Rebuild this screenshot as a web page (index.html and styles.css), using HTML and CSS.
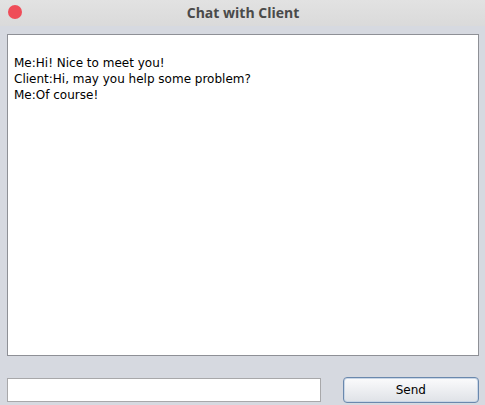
FILE: index.html
```html
<!DOCTYPE html>
<html lang="en">
<head>
    <meta charset="UTF-8">
    <title>Chat with Client</title>
    <link rel="stylesheet" href="styles.css">
</head>
<body>
    <div class="window">
        <div class="titlebar">
            <span class="close-dot"></span>
            <span class="title">Chat with Client</span>
        </div>
        <div class="content">
            <div class="log">
                <div class="line">&nbsp;</div>
                <div class="line">Me:Hi! Nice to meet you!</div>
                <div class="line">Client:Hi, may you help some problem?</div>
                <div class="line">Me:Of course!</div>
            </div>
            <div class="send-row">
                <input class="msg" type="text">
                <button class="send-btn">Send</button>
            </div>
        </div>
    </div>
</body>
</html>
```

FILE: styles.css
```css
* {
    margin: 0;
    padding: 0;
    box-sizing: border-box;
}
body {
    width: 485px;
    height: 405px;
    overflow: hidden;
    background-color: #d6d9e0;
    font-family: "DejaVu Sans", sans-serif;
}
.window {
    display: flex;
    flex-direction: column;
    height: 405px;
}
.titlebar {
    position: relative;
    height: 26px;
    background: linear-gradient(#e2e2e2, #dadada);
    display: flex;
    align-items: center;
    justify-content: center;
}
.close-dot {
    position: absolute;
    left: 8px;
    top: 5px;
    width: 14px;
    height: 14px;
    border-radius: 50%;
    background-color: #ef4c58;
}
.title {
    font-family: "Open Sans", "DejaVu Sans", sans-serif;
    font-weight: bold;
    font-size: 14px;
    color: #4a4a4a;
    margin-top: -1px;
    margin-left: 1px;
}
.content {
    padding: 8px 6px 0 7px;
}
.log {
    width: 472px;
    height: 322px;
    background-color: #fff;
    border: 1px solid #8e9096;
    padding: 4px 6px;
    font-size: 12px;
    line-height: 16px;
    color: #000;
}
.send-row {
    display: flex;
    align-items: center;
    margin-top: 21px;
}
.msg {
    width: 315px;
    height: 24px;
    border: 1px solid #a8a8aa;
    background-color: #fff;
    outline: none;
}
.send-btn {
    margin-left: 22px;
    width: 137px;
    height: 26px;
    border: 1px solid #6a88ad;
    border-radius: 4px;
    background: linear-gradient(#fbfbfc, #dfe2e7);
    font-family: "DejaVu Sans", sans-serif;
    font-size: 12px;
    color: #000;
    box-shadow: inset 0 0 0 1px #c9d6e6;
}
```
